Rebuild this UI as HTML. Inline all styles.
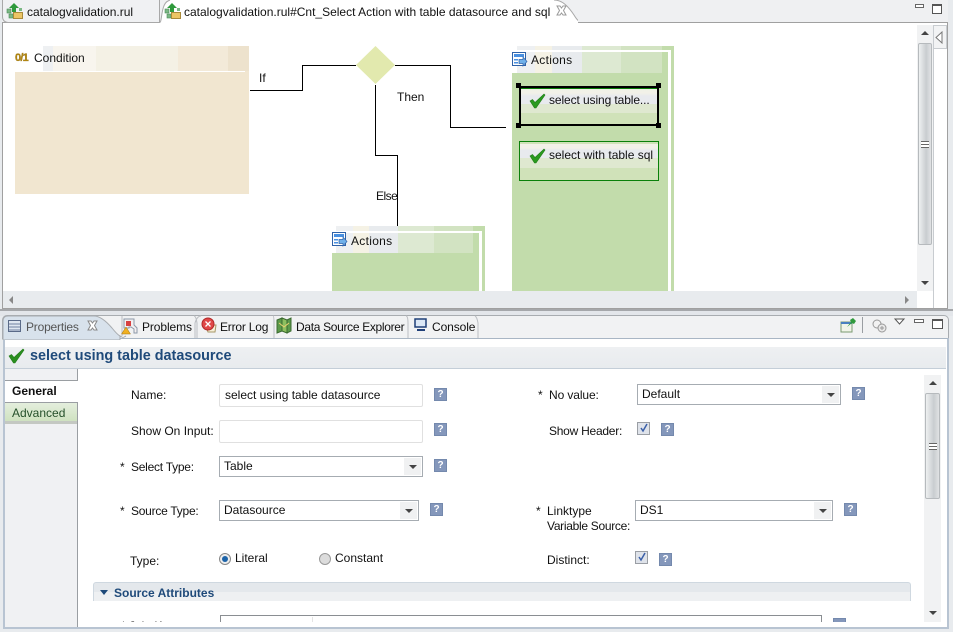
<!DOCTYPE html>
<html><head><meta charset="utf-8"><style>
*{box-sizing:border-box}
html,body{margin:0;padding:0}
body{width:953px;height:632px;position:relative;overflow:hidden;background:#e8ebee;font:12px "Liberation Sans",sans-serif;color:#111}
.a{position:absolute}
.t{position:absolute;white-space:nowrap;line-height:14px}
.help{position:absolute;width:13px;height:13px;background:#8497bb;border:1px solid #7489ad;color:#fff;font:bold 10px/11px "Liberation Sans",sans-serif;text-align:center}
.inp{position:absolute;background:#fff;border:1px solid #e0e0e0;border-radius:2px}
.cmb{position:absolute;background:#fff;border:1px solid #a6acb2;height:21px}
.cmb span{position:absolute;left:4px;top:2px;line-height:14px;white-space:nowrap}
.cmb i{position:absolute;right:1px;top:1px;width:17px;height:17px;background:#f0f1f2}
.cmb i:after{content:"";position:absolute;left:5px;top:7px;border:4px solid transparent;border-top:4px solid #444;border-bottom:0}
.chk{position:absolute;width:13px;height:13px;background:#dfe3ea;border:1px solid #9a9ea4}
.line{position:absolute;background:#000}
</style></head><body>
<!-- editor pane -->
<div class="a" style="left:2px;top:0;width:946px;height:22px;background:#eff0f2"></div>
<div class="a" style="left:2px;top:22px;width:946px;height:287px;background:#fff;border:1px solid #a0a0a0"></div>
<div class="a" style="left:2px;top:0;width:158px;height:23px;background:#f0f1f3;border:1px solid #a8a8a8;border-top:0;border-radius:0 0 0 6px"></div>
<svg class="a" style="left:158px;top:0" width="420" height="24"><path d="M0 23H2C4 23 3 4 10 1L12 0H396C404 0 410 6 416 15C419 20 421 22 424 22V24H0Z" fill="#fff"/><path d="M2 22C4 22 3 4 10 1L12 0M396 0C404 0 410 6 416 15C419 20 421 22 424 22" fill="none" stroke="#a8a8a8"/></svg>
<svg class="a" style="left:6px;top:3px" width="18" height="16"><rect x="1" y="6" width="4" height="4" fill="#7ab884" stroke="#4a8a58" stroke-width=".6"/><rect x="3" y="11" width="4" height="4" fill="#7ab884" stroke="#4a8a58" stroke-width=".6"/><rect x="7.500" y="9.500" width="9" height="6" fill="#ecc565" stroke="#a98a3a"/><path d="M8 0L13 5H10V9H6V5H3Z" fill="#2f9a3c"/><rect x="13" y="5" width="3" height="3" fill="#7ab884"/></svg>
<div class="t" style="left:27px;top:5px">catalogvalidation.rul</div>
<svg class="a" style="left:164px;top:3px" width="18" height="16"><rect x="1" y="6" width="4" height="4" fill="#7ab884" stroke="#4a8a58" stroke-width=".6"/><rect x="3" y="11" width="4" height="4" fill="#7ab884" stroke="#4a8a58" stroke-width=".6"/><rect x="7.500" y="9.500" width="9" height="6" fill="#ecc565" stroke="#a98a3a"/><path d="M8 0L13 5H10V9H6V5H3Z" fill="#2f9a3c"/><rect x="13" y="5" width="3" height="3" fill="#7ab884"/></svg>
<div class="t" style="left:184px;top:5px">catalogvalidation.rul#Cnt_Select Action with table datasource and sql</div>
<svg class="a" style="left:556px;top:5px" width="12" height="12"><path d="M1 1L4 1L5.500 3L7 1L10 1L7.500 5.500L10 10L7 10L5.500 8L4 10L1 10L3.500 5.500Z" fill="#fff" stroke="#9a9a9a"/></svg>
<div class="a" style="left:915px;top:4px;width:9px;height:4px;background:#fff;border:1px solid #666"></div>
<div class="a" style="left:932px;top:4px;width:10px;height:10px;background:#fff;border:1px solid #555;border-top-width:2px"></div>

<!-- Condition -->
<div class="a" style="left:15px;top:71px;width:234px;height:123px;background:#f1e6d0"></div>
<div class="a" style="left:43px;top:46px;width:206px;height:25px;background:linear-gradient(90deg,#eef0f2 0,#eef0f2 10px,#f8f5ee 10px,#f8f5ee 53px,#f4f1e5 53px,#f4f1e5 135px,#f3ead9 135px,#f3ead9 185px,#ede2cd 185px)"></div>
<div class="a" style="left:15px;top:71px;width:230px;height:1px;background:#fff"></div>
<div class="a" style="left:15px;top:52px;font:bold 11px/12px 'Liberation Sans',sans-serif;color:#b88a10;letter-spacing:-.8px;-webkit-text-stroke:.3px #8a6a10">0/1</div>
<div class="t" style="left:34px;top:51px">Condition</div>

<!-- Connections -->
<div class="line" style="left:250px;top:90px;width:52px;height:1px"></div>
<div class="line" style="left:302px;top:65px;width:1px;height:26px"></div>
<div class="line" style="left:302px;top:65px;width:54px;height:1px"></div>
<div class="line" style="left:395px;top:65px;width:56px;height:1px"></div>
<div class="line" style="left:450px;top:65px;width:1px;height:62px"></div>
<div class="line" style="left:450px;top:127px;width:56px;height:1px"></div>
<div class="line" style="left:375px;top:85px;width:1px;height:71px"></div>
<div class="line" style="left:375px;top:155px;width:22px;height:1px"></div>
<div class="line" style="left:397px;top:155px;width:1px;height:71px"></div>
<svg class="a" style="left:355px;top:45px" width="42" height="40"><path d="M20.500 1L40 20L20.500 39L1 20Z" fill="#e2e9ae"/></svg>
<div class="t" style="left:259px;top:71px">If</div>
<div class="t" style="left:397px;top:90px">Then</div>
<div class="t" style="left:376px;top:189px;background:#fff;letter-spacing:-.5px">Else</div>

<!-- Actions right -->
<div class="a" style="left:512px;top:73px;width:162px;height:218px;background:#c2dcab"></div>
<div class="a" style="left:517px;top:46px;width:157px;height:27px;background:linear-gradient(90deg,#eef0f2 0,#eef0f2 18px,#f5f2e5 18px,#f5f2e5 35px,#e8ebee 35px,#e8ebee 65px,#dde9d2 65px,#dde9d2 104px,#d2e3c2 104px,#d2e3c2 145px,#c2dcab 145px)"></div>
<div class="a" style="left:668px;top:51px;width:3px;height:240px;background:#fff"></div>
<div class="a" style="left:517px;top:50px;width:154px;height:2px;background:#fff"></div>
<svg class="a" style="left:512px;top:52px" width="16" height="16"><rect x=".5" y=".5" width="13" height="13" fill="#fff" stroke="#2f62a8"/><rect x="2" y="2" width="10" height="3" fill="#4a90e0"/><path d="M2 7h4v1.500H2zM2 10h4v1.500H2z" fill="#4a90e0"/><path d="M7 7.500h4V5l4 4.500-4 4.500v-2.500H7z" fill="#6fb0ea" stroke="#2f62a8" stroke-width=".7"/></svg>
<div class="t" style="left:531px;top:53px;letter-spacing:.3px">Actions</div>

<div class="a" style="left:519px;top:86px;width:140px;height:40px;background:#d0e2b9;border:2px solid #000"></div>
<div class="a" style="left:521px;top:88px;width:136px;height:25px;background:linear-gradient(#eff2e6 0,#f2f1e8 5px,#e8eaee 8px,#e8eaee 16px,#dfe8d0 16px)"></div>
<div class="a" style="left:521px;top:88px;width:136px;height:1px;background:#0a800a"></div>
<div class="a" style="left:516px;top:83px;width:5px;height:5px;background:#000"></div>
<div class="a" style="left:656px;top:83px;width:5px;height:5px;background:#000"></div>
<div class="a" style="left:516px;top:123px;width:5px;height:5px;background:#000"></div>
<div class="a" style="left:656px;top:123px;width:5px;height:5px;background:#000"></div>
<svg class="a" style="left:529px;top:93px" width="17" height="16"><path d="M1 8L3.500 6.500L6 9.500L15 1L16 2L7 15H5.500Z" fill="#2b9a1f" stroke="#1f7a18" stroke-width=".6"/></svg>
<div class="t" style="left:549px;top:93px;letter-spacing:-.1px">select using table...</div>

<div class="a" style="left:519px;top:141px;width:140px;height:40px;background:#d0e2b9;border:1px solid #0a800a"></div>
<div class="a" style="left:520px;top:144px;width:138px;height:24px;background:linear-gradient(#f2f1e8 0,#f2f1e8 4px,#e8eaee 6px,#e8eaee 14px,#dfe8d0 14px)"></div>
<svg class="a" style="left:529px;top:148px" width="17" height="16"><path d="M1 8L3.500 6.500L6 9.500L15 1L16 2L7 15H5.500Z" fill="#2b9a1f" stroke="#1f7a18" stroke-width=".6"/></svg>
<div class="t" style="left:549px;top:148px">select with table sql</div>

<!-- Actions bottom -->
<div class="a" style="left:332px;top:253px;width:153px;height:38px;background:#c2dcab"></div>
<div class="a" style="left:336px;top:226px;width:149px;height:27px;background:linear-gradient(90deg,#eef0f2 0,#eef0f2 17px,#f5f2e5 17px,#f5f2e5 33px,#e8ebee 33px,#e8ebee 62px,#dde9d2 62px,#dde9d2 98px,#d2e3c2 98px,#d2e3c2 137px,#c2dcab 137px)"></div>
<div class="a" style="left:479px;top:231px;width:3px;height:60px;background:#fff"></div>
<div class="a" style="left:336px;top:231px;width:146px;height:2px;background:#fff"></div>
<svg class="a" style="left:332px;top:232px" width="16" height="16"><rect x=".5" y=".5" width="13" height="13" fill="#fff" stroke="#2f62a8"/><rect x="2" y="2" width="10" height="3" fill="#4a90e0"/><path d="M2 7h4v1.500H2zM2 10h4v1.500H2z" fill="#4a90e0"/><path d="M7 7.500h4V5l4 4.500-4 4.500v-2.500H7z" fill="#6fb0ea" stroke="#2f62a8" stroke-width=".7"/></svg>
<div class="t" style="left:351px;top:234px;letter-spacing:.3px">Actions</div>

<!-- editor scrollbars -->
<div class="a" style="left:917px;top:25px;width:16px;height:266px;background:#f1f2f3"></div>
<div class="a" style="left:918px;top:43px;width:14px;height:202px;background:linear-gradient(90deg,#eef0f1,#c9cdd0 60%,#e0e2e4);border:1px solid #b6babd;border-radius:2px"></div>
<div class="a" style="left:921px;top:31px;border:4px solid transparent;border-bottom:4px solid #444;border-top:0"></div>
<div class="a" style="left:921px;top:281px;border:4px solid transparent;border-top:4px solid #444;border-bottom:0"></div>
<div class="a" style="left:921px;top:141px;width:8px;height:7px;border-top:1px solid #666;border-bottom:1px solid #666;background:linear-gradient(#fff 0 2px,#666 2px 3px,#fff 3px)"></div>
<div class="a" style="left:933px;top:25px;width:14px;height:283px;background:#fff;border-left:1px solid #c8ccd0"></div>
<div class="a" style="left:933px;top:25px;width:14px;height:24px;background:#f2f3f4;border:1px solid #c8ccd0"></div>
<svg class="a" style="left:935px;top:31px" width="10" height="14"><path d="M7 1V12L1 6.500Z" fill="#fff" stroke="#777"/></svg>
<div class="a" style="left:3px;top:291px;width:914px;height:17px;background:#e8ebee"></div>
<div class="a" style="left:9px;top:296px;border:4px solid transparent;border-right:4px solid #888;border-left:0"></div>
<div class="a" style="left:905px;top:296px;border:4px solid transparent;border-left:4px solid #888;border-right:0"></div>

<!-- properties pane -->
<div class="a" style="left:0;top:309px;width:953px;height:2px;background:#a5a7aa"></div>
<div class="a" style="left:0;top:311px;width:953px;height:5px;background:#e3e6ea"></div>
<div class="a" style="left:2px;top:315px;width:947px;height:24px;background:#f1f2f3;border:1px solid #a8acb0;border-bottom:0;border-radius:5px 5px 0 0"></div>
<div class="a" style="left:3px;top:338px;width:946px;height:291px;background:#fff;border:2px solid #b8c4d2;border-top:1px solid #a9b6c4"></div>
<svg class="a" style="left:2px;top:315px" width="480" height="25"><path d="M1 24V6Q1 1 6 1H92C98 1 104 6 110 13C114 18 116 20 118 21V25H1Z" fill="#d8e2ec" stroke="#a8acb0"/><path d="M118 21C122 23 120 23 124 21" fill="none" stroke="#a8acb0"/><path d="M120 21V1M192 1Q194 1 195 8V23M193 23V8Q195 1 199 1M271 1Q272 1 272 8V23M404 1Q406 1 406 8V23M473 1Q475 2 476 8V23" fill="none" stroke="#bcbfc3"/></svg>
<svg class="a" style="left:8px;top:320px" width="14" height="12"><rect x=".5" y=".5" width="12" height="11" fill="#dfe6f0" stroke="#5a6a88"/><path d="M1 4h11M1 7h11M1 10h11" stroke="#6f80a0"/></svg>
<div class="t" style="left:26px;top:320px;color:#555;letter-spacing:-.2px">Properties</div>
<svg class="a" style="left:87px;top:320px" width="12" height="12"><path d="M1 1L4 1L5.500 3L7 1L10 1L7.500 5.500L10 10L7 10L5.500 8L4 10L1 10L3.500 5.500Z" fill="#fff" stroke="#888"/></svg>
<svg class="a" style="left:121px;top:318px" width="18" height="17"><path d="M3 1h10v6l3 3v5h-3v-4l-3-2H8v1H3z" fill="#f4f0f0" stroke="#8c98a8"/><rect x="5" y="3" width="5" height="5" fill="#d84040"/><path d="M5 9L9.500 16H.5Z" fill="#f0b020" stroke="#a07010" stroke-width=".5"/></svg>
<div class="t" style="left:142px;top:320px;letter-spacing:-.1px">Problems</div>
<svg class="a" style="left:200px;top:317px" width="18" height="18"><path d="M5 8h11l-1 7H8z" fill="#f6efd8" stroke="#a89868"/><circle cx="8" cy="7" r="6" fill="#e04848" stroke="#b02828"/><path d="M5.500 4.500l5 5m0-5l-5 5" stroke="#fff" stroke-width="1.300"/></svg>
<div class="t" style="left:220px;top:320px;letter-spacing:-.2px">Error Log</div>
<svg class="a" style="left:276px;top:317px" width="18" height="18"><path d="M1 3L6 1V14L1 16Z" fill="#5c9a4a" stroke="#3a6a30"/><path d="M6 1L11 3V16L6 14Z" fill="#8cc060" stroke="#3a6a30"/><path d="M11 3L15 1V14L11 16Z" fill="#5c9a4a" stroke="#3a6a30"/><path d="M3 6L8 10L13 6" stroke="#e8d070" fill="none"/></svg>
<div class="t" style="left:296px;top:320px;letter-spacing:-.32px">Data Source Explorer</div>
<svg class="a" style="left:414px;top:318px" width="14" height="14"><rect x="1" y="1" width="11" height="8" fill="#dce8f6" stroke="#1f3f78" stroke-width="1.500"/><path d="M3 12h8" stroke="#1f3f78" stroke-width="2"/></svg>
<div class="t" style="left:432px;top:320px;letter-spacing:-.1px">Console</div>
<svg class="a" style="left:840px;top:318px" width="16" height="15"><rect x="1" y="4" width="11" height="10" fill="#f0f4e8" stroke="#7a9a70"/><rect x="1" y="4" width="11" height="2" fill="#4a80c0"/><path d="M7 9L11 4l-1-2 3-2 3 3-2 3-2-1z" fill="#2f9a3c"/></svg>
<div class="a" style="left:862px;top:317px;width:1px;height:16px;background:#9a9ea2"></div>
<svg class="a" style="left:871px;top:317px" width="18" height="17"><circle cx="6" cy="7" r="4" fill="#f2f2f2" stroke="#999"/><circle cx="11" cy="11" r="4" fill="#e8e8e8" stroke="#999"/><path d="M9 11h4M11 9v4" stroke="#999"/></svg>
<svg class="a" style="left:894px;top:318px" width="12" height="8"><path d="M1 1H10L5.500 6Z" fill="#fff" stroke="#555"/></svg>
<div class="a" style="left:914px;top:319px;width:10px;height:4px;background:#fff;border:1px solid #666"></div>
<div class="a" style="left:932px;top:319px;width:11px;height:10px;background:#fff;border:1px solid #555;border-top-width:2px"></div>

<!-- header -->
<div class="a" style="left:5px;top:340px;width:941px;height:29px;background:linear-gradient(#fff 0 7px,#eef0f2 7px,#e8ebee 100%);border-bottom:1px solid #c4ced8"></div>
<svg class="a" style="left:8px;top:348px" width="17" height="16"><path d="M1 8L3.500 6.500L6 9.500L15 1L16 2L7 15H5.500Z" fill="#2b8f1f" stroke="#1f7a18" stroke-width=".6"/></svg>
<div class="t" style="left:30px;top:349px;font-weight:bold;font-size:14.400px;color:#1f4a7a">select using table datasource</div>

<!-- side tabs -->
<div class="a" style="left:5px;top:369px;width:73px;height:12px;background:#f0f1f3;border-right:1px solid #9a9ea2;border-bottom:1px solid #9a9ea2"></div>
<div class="a" style="left:5px;top:381px;width:73px;height:21px;background:#fff"></div>
<div class="t" style="left:12px;top:384px;font-weight:bold">General</div>
<div class="a" style="left:5px;top:402px;width:73px;height:225px;background:#f0f1f3;border-right:1px solid #9a9ea2"></div>
<div class="a" style="left:5px;top:402px;width:73px;height:22px;background:linear-gradient(#e4eedd 0,#cfe2c0 18px,#c4c8c2 18px,#c4c8c2 21px,#fff 21px);border-top:1px solid #9a9ea2;border-right:1px solid #9a9ea2"></div>
<div class="t" style="left:12px;top:406px;color:#25502a">Advanced</div>

<!-- form left -->
<div class="t" style="left:131px;top:388px">Name:</div>
<div class="inp" style="left:219px;top:384px;width:204px;height:23px"></div>
<div class="t" style="left:225px;top:388px">select using table datasource</div>
<div class="help" style="left:434px;top:388px">?</div>
<div class="t" style="left:131px;top:424px">Show On Input:</div>
<div class="inp" style="left:219px;top:420px;width:204px;height:23px"></div>
<div class="help" style="left:434px;top:423px">?</div>
<div class="t" style="left:120px;top:460px">*</div>
<div class="t" style="left:131px;top:460px;letter-spacing:-.25px">Select Type:</div>
<div class="cmb" style="left:219px;top:456px;width:204px"><span>Table</span><i></i></div>
<div class="help" style="left:434px;top:459px">?</div>
<div class="t" style="left:120px;top:504px">*</div>
<div class="t" style="left:131px;top:504px;letter-spacing:-.25px">Source Type:</div>
<div class="cmb" style="left:219px;top:500px;width:200px"><span>Datasource</span><i></i></div>
<div class="help" style="left:430px;top:503px">?</div>
<div class="t" style="left:130px;top:554px">Type:</div>
<svg class="a" style="left:218px;top:552px" width="14" height="14"><circle cx="7" cy="7" r="5.500" fill="#eee" stroke="#888"/><circle cx="7" cy="7" r="3" fill="#1c63a8"/></svg>
<div class="t" style="left:235px;top:551px">Literal</div>
<svg class="a" style="left:318px;top:552px" width="14" height="14"><circle cx="7" cy="7" r="5.500" fill="#dcdcdc" stroke="#999"/></svg>
<div class="t" style="left:335px;top:551px">Constant</div>

<!-- form right -->
<div class="t" style="left:538px;top:388px">*</div>
<div class="t" style="left:549px;top:388px;letter-spacing:-.1px">No value:</div>
<div class="cmb" style="left:637px;top:384px;width:204px"><span>Default</span><i></i></div>
<div class="help" style="left:852px;top:387px">?</div>
<div class="t" style="left:549px;top:424px;letter-spacing:-.25px">Show Header:</div>
<div class="chk" style="left:637px;top:422px"></div>
<svg class="a" style="left:638px;top:422px" width="12" height="12"><path d="M3 6L5 9L9 2" fill="none" stroke="#3a5fa8" stroke-width="1.500"/></svg>
<div class="help" style="left:661px;top:423px">?</div>
<div class="t" style="left:536px;top:504px">*</div>
<div class="t" style="left:547px;top:504px">Linktype</div>
<div class="t" style="left:547px;top:519px;letter-spacing:-.3px">Variable Source:</div>
<div class="cmb" style="left:635px;top:500px;width:198px"><span>DS1</span><i></i></div>
<div class="help" style="left:844px;top:503px">?</div>
<div class="t" style="left:547px;top:553px">Distinct:</div>
<div class="chk" style="left:635px;top:551px"></div>
<svg class="a" style="left:636px;top:551px" width="12" height="12"><path d="M3 6L5 9L9 2" fill="none" stroke="#3a5fa8" stroke-width="1.500"/></svg>
<div class="help" style="left:659px;top:553px">?</div>

<!-- section -->
<div class="a" style="left:93px;top:582px;width:818px;height:19px;background:linear-gradient(#e4e8ec 0 9px,#eef0f2 9px);border:1px solid #cfd8e0;border-bottom:0;border-radius:3px 3px 0 0"></div>
<div class="a" style="left:100px;top:590px;border:4px solid transparent;border-top:5px solid #1f4a7a;border-bottom:0"></div>
<div class="t" style="left:114px;top:586px;font-weight:bold;color:#1f4a7a">Source Attributes</div>
<div class="a" style="left:220px;top:615px;width:602px;height:7px;background:#fff;border:1px solid #8a8e92;border-bottom:0"></div>
<div class="a" style="left:312px;top:617px;width:1px;height:5px;background:#e4e4e4"></div>
<div class="help" style="left:833px;top:618px;height:4px;border-bottom:0"></div>
<div class="t" style="left:121px;top:619px;height:3px;overflow:hidden">* Join Key:</div>

<!-- form scrollbar -->
<div class="a" style="left:924px;top:375px;width:17px;height:247px;background:#f1f2f3"></div>
<div class="a" style="left:925px;top:393px;width:15px;height:106px;background:linear-gradient(90deg,#eef0f1,#c9cdd0 60%,#e0e2e4);border:1px solid #b6babd;border-radius:2px"></div>
<div class="a" style="left:929px;top:381px;border:4px solid transparent;border-bottom:4px solid #444;border-top:0"></div>
<div class="a" style="left:929px;top:611px;border:4px solid transparent;border-top:4px solid #444;border-bottom:0"></div>
<div class="a" style="left:929px;top:443px;width:8px;height:7px;border-top:1px solid #666;border-bottom:1px solid #666;background:linear-gradient(#fff 0 2px,#666 2px 3px,#fff 3px)"></div>
</body></html>
